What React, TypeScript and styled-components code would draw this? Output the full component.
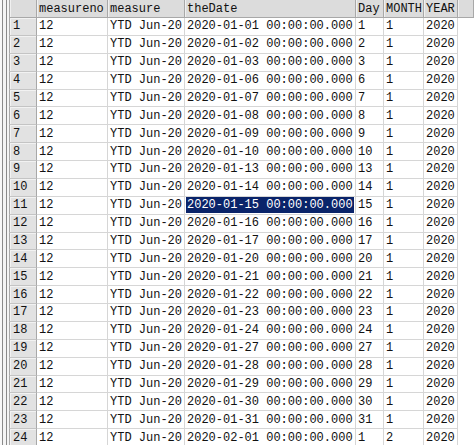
import React from "react";
import styled, { createGlobalStyle } from "styled-components";

const Global = createGlobalStyle`
  html, body { margin: 0; padding: 0; background: #ffffff; overflow: hidden; }
  #root { width: 474px; height: 445px; overflow: hidden; }
`;

const Page = styled.div`
  display: flex;
  width: 474px;
  height: 445px;
  overflow: hidden;
  background: #ffffff;
`;

const Frame = styled.div`
  width: 9px;
  flex: none;
  box-sizing: border-box;
  background: #f4f4f4;
  border-left: 2px solid #f8f8f8;
  display: flex;
  gap: 3px;
`;

const FrameLine = styled.div`
  width: 1px;
  background: #8a8a8a;
`;

const Grid = styled.div`
  flex: 1;
  display: grid;
  grid-template-columns: 28px 71px 77px 171px 28px 40px 34px 1fr;
  grid-template-rows: 18px;
  grid-auto-rows: 17.875px;
  font-family: "Liberation Mono", "DejaVu Sans Mono", monospace;
  font-size: 12px;
  color: #111;
`;

const HeaderCell = styled.div<{ $corner?: boolean }>`
  box-sizing: border-box;
  background: #dcdcdc;
  border-right: 1px solid #a8a8a8;
  border-bottom: 1px solid #a8a8a8;
  box-shadow: inset 1px 0 0 #f0f0f0;
  padding-left: 2px;
  display: flex;
  align-items: center;
  white-space: nowrap;
  overflow: hidden;
  ${(p) => (p.$corner ? "border-left: 1px solid #a8a8a8;" : "")}
`;

const RowHeader = styled.div`
  box-sizing: border-box;
  background: #e2e2e2;
  border-left: 1px solid #a8a8a8;
  border-right: 1px solid #a8a8a8;
  border-bottom: 1px solid #c4c4c4;
  box-shadow: inset 1px 1px 0 #f2f2f2;
  padding-left: 3px;
  display: flex;
  align-items: center;
  white-space: nowrap;
`;

const Cell = styled.div<{ $selected?: boolean }>`
  box-sizing: border-box;
  border-right: 1px solid #d6d6d6;
  border-bottom: 1px solid #d6d6d6;
  padding-left: 2px;
  display: flex;
  align-items: center;
  white-space: nowrap;
  overflow: hidden;
  background: #ffffff;
  ${(p) =>
    p.$selected
      ? `& > span { background: #0a246a; color: #ffffff; padding: 0 1px; margin-left: -1px; line-height: 16px; }`
      : ""}
`;

const Filler = styled.div`
  background: #ffffff;
`;

const days = [1, 2, 3, 6, 7, 8, 9, 10, 13, 14, 15, 16, 17, 20, 21, 22, 23, 24, 27, 28, 29, 30, 31];

const rows = [
  ...days.map((d) => ({ month: 1, day: d })),
  { month: 2, day: 1 },
];

const pad = (n: number) => (n < 10 ? "0" + n : "" + n);

const headers = ["measureno", "measure", "theDate", "Day", "MONTH", "YEAR"];

export default function App() {
  return (
    <>
      <Global />
      <Page>
        <Frame>
          <FrameLine />
          <FrameLine />
        </Frame>
        <Grid>
          <HeaderCell $corner />
          {headers.map((h) => (
            <HeaderCell key={h}>{h}</HeaderCell>
          ))}
          <HeaderCell />
          {rows.map((r, i) => (
            <React.Fragment key={i}>
              <RowHeader>{i + 1}</RowHeader>
              <Cell>12</Cell>
              <Cell>YTD Jun-20</Cell>
              <Cell $selected={i === 10}>
                <span>{`2020-${pad(r.month)}-${pad(r.day)} 00:00:00.000`}</span>
              </Cell>
              <Cell>{r.day}</Cell>
              <Cell>{r.month}</Cell>
              <Cell>2020</Cell>
              <Filler />
            </React.Fragment>
          ))}
        </Grid>
      </Page>
    </>
  );
}
